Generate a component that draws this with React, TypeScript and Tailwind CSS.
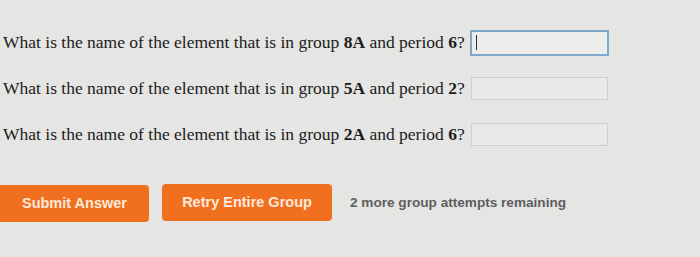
import React from 'react';

const questions = [
  { group: '8A', period: '6', focused: true },
  { group: '5A', period: '2', focused: false },
  { group: '2A', period: '6', focused: false },
];

export default function App() {
  return (
    <div className="w-[700px] h-[257px] bg-[#e5e5e3] overflow-hidden">
      <div className="pt-[30px] pl-[3px] flex flex-col gap-[21px]">
        {questions.map((q, i) => (
          <div key={i} className="flex items-center h-[25px]">
            <span className="text-[17.5px] text-[#1c1c1c] font-['Liberation_Serif',serif] leading-none">
              What is the name of the element that is in group <b>{q.group}</b> and period <b>{q.period}</b>?
            </span>
            <div
              className={
                q.focused
                  ? 'ml-[5px] w-[139px] h-[26px] border-2 border-[#7fa8d0] bg-[#ececea] flex items-center pl-[4px]'
                  : 'ml-[6px] w-[137px] h-[23px] border border-[#cfcfcd] bg-[#e9e9e7]'
              }
            >
              {q.focused && <div className="w-px h-[15px] bg-[#333]" />}
            </div>
          </div>
        ))}
      </div>
      <div className="mt-[38px] flex items-center">
        <button className="w-[149px] h-[37px] bg-[#f0701f] rounded-r-[4px] text-[#fde8dc] text-[14.5px] font-bold font-['Liberation_Sans',Arial,sans-serif]">
          Submit Answer
        </button>
        <button className="ml-[13px] w-[170px] h-[37px] bg-[#f0701f] rounded-[4px] text-[#fde8dc] text-[14.5px] font-bold font-['Liberation_Sans',Arial,sans-serif] -mt-[2px]">
          Retry Entire Group
        </button>
        <span className="ml-[18px] text-[13.6px] font-bold text-[#5e5e5e] font-['Liberation_Sans',Arial,sans-serif]">
          2 more group attempts remaining
        </span>
      </div>
    </div>
  );
}
